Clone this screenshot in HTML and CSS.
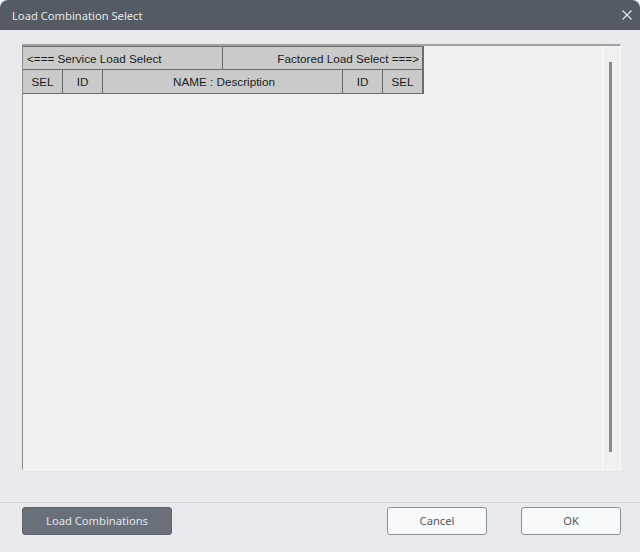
FILE: index.html
```html
<!DOCTYPE html>
<html>
<head>
<meta charset="utf-8">
<link rel="stylesheet" href="styles.css">
</head>
<body>
<div class="window">
  <div class="titlebar">
    <span class="title">Load Combination Select</span>
    <svg class="close" width="10" height="10" viewBox="0 0 10 10"><path d="M0.5 0.5L9.5 9.5M9.5 0.5L0.5 9.5" stroke="#e8e8e8" stroke-width="1.1"/></svg>
  </div>
  <div class="content">
    <div class="panel">
      <div class="grid-area">
        <div class="hdr">
          <div class="row row1">
            <div class="cell left">&lt;=== Service Load Select</div>
            <div class="cell right">Factored Load Select ===&gt;</div>
          </div>
          <div class="row row2">
            <div class="cell c-sel">SEL</div>
            <div class="cell c-id">ID</div>
            <div class="cell c-name">NAME : Description</div>
            <div class="cell c-id">ID</div>
            <div class="cell c-sel">SEL</div>
          </div>
        </div>
      </div>
      <div class="vscroll"><div class="thumb"></div></div>
    </div>
  </div>
  <div class="footer">
    <button class="btn btn-dark">Load Combinations</button>
    <div class="spacer"></div>
    <button class="btn btn-light">Cancel</button>
    <button class="btn btn-light ok">OK</button>
  </div>
</div>
</body>
</html>
```
FILE: styles.css
```css
html, body {
  margin: 0;
  padding: 0;
  background: #ffffff;
}
body {
  width: 640px;
  height: 552px;
  overflow: hidden;
  font-family: "Liberation Sans", Arial, sans-serif;
}
.window {
  width: 640px;
  height: 552px;
  background: #e9eaee;
  border-radius: 8px 8px 0 0;
  overflow: hidden;
  display: flex;
  flex-direction: column;
}
.titlebar {
  height: 30px;
  background: #555b63;
  display: flex;
  align-items: center;
  justify-content: space-between;
  padding: 0 8px 0 12px;
  flex-shrink: 0;
}
.title {
  color: #e4e6e9;
  font-family: "Noto Sans", "Open Sans", sans-serif;
  font-size: 11.2px;
}
.close {
  display: block;
}
.content {
  padding: 14px 19px 0 22px;
  height: 426px;
}
.panel {
  height: 426px;
  box-sizing: border-box;
  background: #f0f0f0;
  border-top: 2px solid #a2a2a2;
  border-left: 1px solid #8a8a8a;
  border-right: 1px solid #fbfbfb;
  border-bottom: 1px solid #fbfbfb;
  display: flex;
}
.grid-area {
  flex: 1;
}
.hdr {
  width: 401px;
  background: #6d6d6d;
  padding: 1px 0 1px 0;
  display: flex;
  flex-direction: column;
  gap: 1px;
}
.row {
  display: flex;
  gap: 1px;
}
.cell {
  background: #cacaca;
  color: #1c1c1c;
  font-size: 11.7px;
  display: flex;
  align-items: center;
  justify-content: center;
  white-space: nowrap;
}
.row1 .cell {
  height: 22px;
  width: 199px;
}
.row1 .left {
  justify-content: flex-start;
  padding-left: 4px;
  box-sizing: border-box;
}
.row1 .right {
  justify-content: flex-end;
  padding-right: 3px;
  box-sizing: border-box;
}
.row2 .cell {
  height: 23px;
}
.c-sel { width: 39px; }
.c-id { width: 39px; }
.c-name { width: 239px; padding-left: 3px; box-sizing: border-box; }
.vscroll {
  width: 17px;
  border-left: 1px solid #fbfbfb;
  position: relative;
}
.thumb {
  position: absolute;
  left: 6px;
  top: 16px;
  width: 3px;
  height: 390px;
  background: #8a8a8a;
}
.footer {
  margin-top: 32px;
  border-top: 1px solid #d3d5d9;
  padding: 4px 19px 0 22px;
  display: flex;
  align-items: flex-start;
}
.spacer { flex: 1; }
.btn {
  height: 28px;
  box-sizing: border-box;
  border-radius: 3px;
  font-family: "Noto Sans", "Open Sans", sans-serif;
  font-size: 11.2px;
  padding: 0 0 1px 0;
  margin: 0;
}
.btn-dark {
  width: 150px;
  background: #69707a;
  border: 1px solid #5f656d;
  color: #e2e5e8;
}
.btn-light {
  width: 100px;
  background: #f8f9fa;
  border: 1px solid #8e9196;
  color: #55585d;
}
.ok {
  margin-left: 34px;
}
```
